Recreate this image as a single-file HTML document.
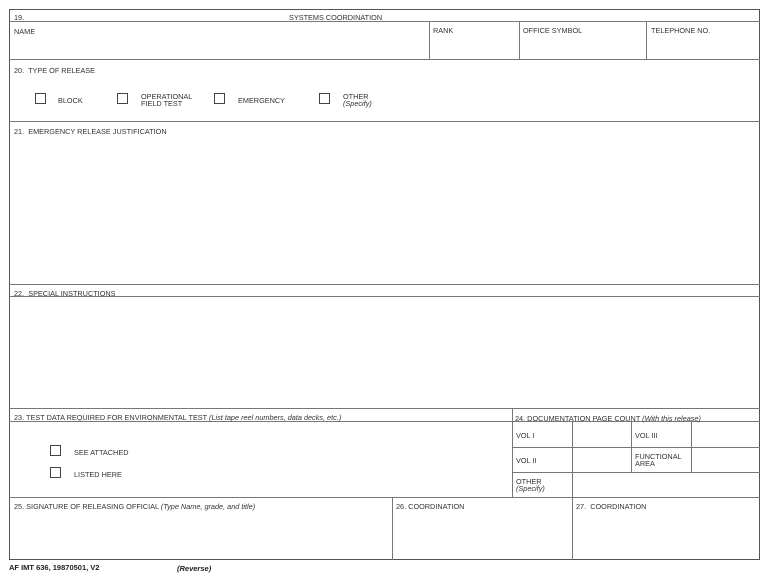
<!DOCTYPE html>
<html><head><meta charset="utf-8"><style>
*{margin:0;padding:0;box-sizing:border-box}
body{width:768px;height:580px;background:#fff;position:relative;overflow:hidden;font-family:"Liberation Sans",Arial,sans-serif;color:#333;font-size:7.3px}
.h{position:absolute;height:1px;background:#777}
.v{position:absolute;width:1px;background:#777}
.t{position:absolute;white-space:nowrap;line-height:7px;font-size:7.3px}
.i{font-style:italic}
.cb{position:absolute;width:11px;height:11px;border:1px solid #444}
</style></head><body>
<div style="position:absolute;left:9px;top:9px;width:751px;height:551px;border:1.5px solid #555"></div>
<div class="h" style="left:9px;top:21px;width:751px"></div>
<div class="h" style="left:9px;top:59px;width:751px"></div>
<div class="h" style="left:9px;top:121px;width:751px"></div>
<div class="h" style="left:9px;top:284px;width:751px"></div>
<div class="h" style="left:9px;top:296px;width:751px"></div>
<div class="h" style="left:9px;top:408px;width:751px"></div>
<div class="h" style="left:9px;top:421px;width:751px"></div>
<div class="h" style="left:512px;top:447px;width:248px"></div>
<div class="h" style="left:512px;top:472px;width:248px"></div>
<div class="h" style="left:9px;top:497px;width:751px"></div>
<div class="v" style="left:429px;top:21px;height:38px"></div>
<div class="v" style="left:519px;top:21px;height:38px"></div>
<div class="v" style="left:646px;top:21px;height:38px"></div>
<div class="v" style="left:512px;top:408px;height:89px"></div>
<div class="v" style="left:572px;top:421px;height:76px"></div>
<div class="v" style="left:631px;top:421px;height:51px"></div>
<div class="v" style="left:691px;top:421px;height:51px"></div>
<div class="v" style="left:392px;top:497px;height:63px"></div>
<div class="v" style="left:572px;top:497px;height:63px"></div>

<div class="t" style="left:14px;top:14px">19.</div>
<div class="t" style="left:289px;top:14px">SYSTEMS COORDINATION</div>
<div class="t" style="left:14px;top:28px">NAME</div>
<div class="t" style="left:433px;top:27px">RANK</div>
<div class="t" style="left:523px;top:27px">OFFICE SYMBOL</div>
<div class="t" style="left:651px;top:27px">TELEPHONE NO.</div>
<div class="t" style="left:14px;top:67px">20.&nbsp; TYPE OF RELEASE</div>
<div class="cb" style="left:35px;top:93px"></div>
<div class="t" style="left:58px;top:97px">BLOCK</div>
<div class="cb" style="left:117px;top:93px"></div>
<div class="t" style="left:141px;top:93px">OPERATIONAL<br>FIELD TEST</div>
<div class="cb" style="left:214px;top:93px"></div>
<div class="t" style="left:238px;top:97px">EMERGENCY</div>
<div class="cb" style="left:319px;top:93px"></div>
<div class="t" style="left:343px;top:93px">OTHER<br><span class="i">(Specify)</span></div>
<div class="t" style="left:14px;top:128px">21.&nbsp; EMERGENCY RELEASE JUSTIFICATION</div>
<div class="t" style="left:14px;top:290px">22.&nbsp; SPECIAL INSTRUCTIONS</div>
<div class="t" style="left:14px;top:414px">23. TEST DATA REQUIRED FOR ENVIRONMENTAL TEST <span class="i">(List tape reel numbers, data decks, etc.)</span></div>
<div class="t" style="left:515px;top:415px">24. DOCUMENTATION PAGE COUNT <span class="i">(With this release)</span></div>
<div class="cb" style="left:50px;top:445px"></div>
<div class="t" style="left:74px;top:449px">SEE ATTACHED</div>
<div class="cb" style="left:50px;top:467px"></div>
<div class="t" style="left:74px;top:471px">LISTED HERE</div>
<div class="t" style="left:516px;top:432px">VOL I</div>
<div class="t" style="left:635px;top:432px">VOL III</div>
<div class="t" style="left:516px;top:457px">VOL II</div>
<div class="t" style="left:635px;top:453px">FUNCTIONAL<br>AREA</div>
<div class="t" style="left:516px;top:478px">OTHER<br><span class="i">(Specify)</span></div>
<div class="t" style="left:14px;top:503px">25. SIGNATURE OF RELEASING OFFICIAL <span class="i">(Type Name, grade, and title)</span></div>
<div class="t" style="left:396px;top:503px">26. COORDINATION</div>
<div class="t" style="left:576px;top:503px">27.&nbsp; COORDINATION</div>
<div class="t" style="left:9px;top:564px;font-weight:bold;font-size:7.5px;color:#222">AF IMT 636, 19870501, V2</div>
<div class="t" style="left:177px;top:565px;font-weight:bold;font-style:italic;font-size:7.5px;color:#222">(Reverse)</div>
</body></html>
